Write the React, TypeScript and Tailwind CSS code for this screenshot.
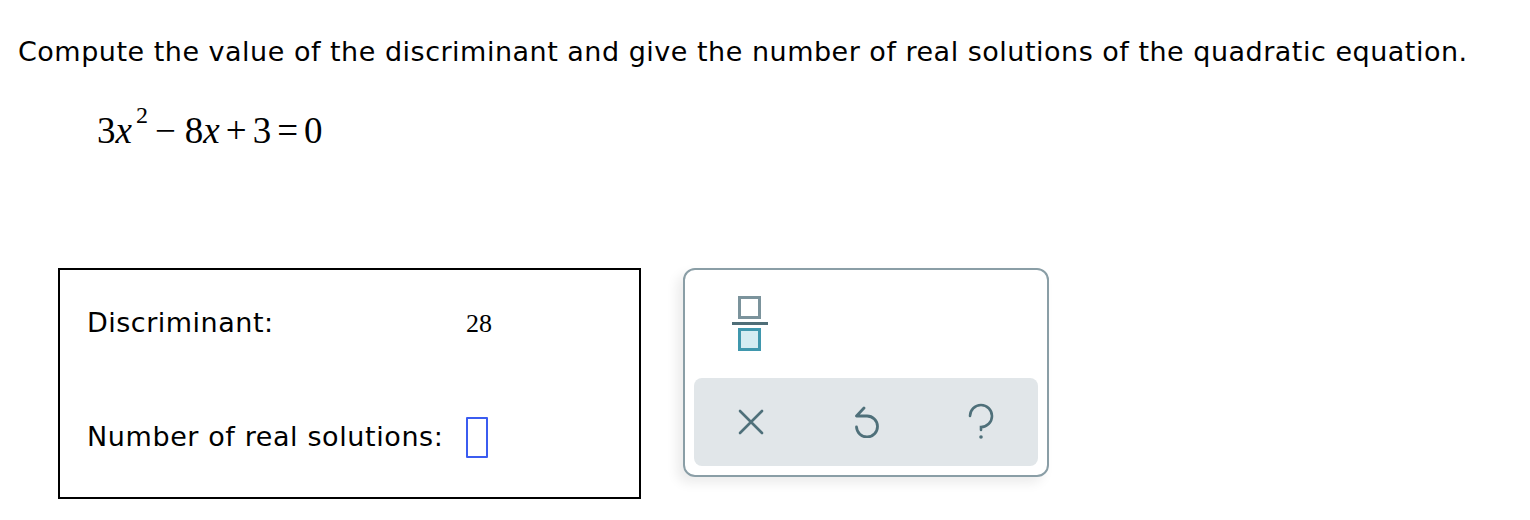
import React from 'react';

const sans = { fontFamily: '"DejaVu Sans", Verdana, sans-serif' };
const serif = { fontFamily: '"Liberation Serif", "Times New Roman", serif' };

function FractionIcon() {
    return (
        <svg width="36" height="56" viewBox="0 0 36 56">
            <rect x="7.5" y="1.5" width="20" height="20" fill="none" stroke="#7b939c" strokeWidth="3" />
            <rect x="0" y="26" width="36" height="3" fill="#4f6e78" />
            <rect x="7.5" y="33.5" width="20" height="20" fill="#d4ecf2" stroke="#3f97ad" strokeWidth="3" />
        </svg>
    );
}

function XIcon() {
    return (
        <svg width="26" height="26" viewBox="0 0 26 26" fill="none" stroke="#4f707a" strokeWidth="2.6" strokeLinecap="round">
            <path d="M2 2 L24 24 M24 2 L2 24" />
        </svg>
    );
}

function UndoIcon() {
    return (
        <svg width="28" height="32" viewBox="0 0 28 32" fill="none" stroke="#4f707a" strokeWidth="2.8" strokeLinecap="round" strokeLinejoin="round">
            <path d="M12 2 L4.5 10 L15 10 A10.5 10.5 0 1 1 4.5 21" />
        </svg>
    );
}

function HelpIcon() {
    return (
        <svg width="28" height="40" viewBox="0 0 28 40" fill="none" stroke="#4f707a" strokeWidth="2.6" strokeLinecap="round">
            <path d="M3 14 A11 11 0 1 1 14 25 V28" />
            <circle cx="14" cy="35" r="1.8" fill="#4f707a" stroke="none" />
        </svg>
    );
}

export default function App() {
    return (
        <div className="min-h-screen bg-white text-black pt-[35px]" style={sans}>
            <p className="pl-[18px] text-[27px] leading-[34px] tracking-[0.5px]">
                Compute the value of the discriminant and give the number of real solutions of the quadratic equation.
            </p>

            {/* Equation */}
            <div className="pl-[97px] mt-[42px] text-[37px] leading-[40px] flex items-baseline" style={serif}>
                <span>3</span>
                <span className="italic">x</span>
                <span className="relative -top-[20px] text-[24px] ml-[4px]">2</span>
                <span className="ml-[7px] mr-[9px]">−</span>
                <span>8</span>
                <span className="italic">x</span>
                <span className="mx-[6px]">+</span>
                <span>3</span>
                <span className="mx-[6px]">=</span>
                <span>0</span>
            </div>

            <div className="flex items-start gap-[42px] pl-[58px] mt-[113px]">
                {/* Answer box */}
                <div className="w-[583px] h-[231px] border-2 border-black pl-[27px] pt-[33px]">
                    <div className="grid grid-cols-[379px_auto] gap-y-[74px] items-center">
                        <div className="h-[40px] flex items-center text-[27px] tracking-[0.5px]">Discriminant:</div>
                        <div className="h-[40px] flex items-center text-[26px]" style={serif}>28</div>
                        <div className="h-[40px] flex items-center text-[27px] tracking-[0.6px]">Number of real solutions:</div>
                        <div className="h-[40px] flex items-center">
                            <div className="w-[22px] h-[41px] border-2 border-[#3b5cf0] rounded-[1px]" />
                        </div>
                    </div>
                </div>

                {/* Tool panel */}
                <div className="w-[366px] h-[209px] border-2 border-[#8a9ea6] rounded-[12px] shadow-[-6px_6px_12px_rgba(0,0,0,0.08)] flex flex-col">
                    <div className="pl-[47px] pt-[26px] h-[108px]">
                        <FractionIcon />
                    </div>
                    <div className="mx-[9px] h-[88px] bg-[#e1e6e9] rounded-[8px] grid grid-cols-3 items-center justify-items-center">
                        <XIcon />
                        <UndoIcon />
                        <HelpIcon />
                    </div>
                </div>
            </div>
        </div>
    );
}
